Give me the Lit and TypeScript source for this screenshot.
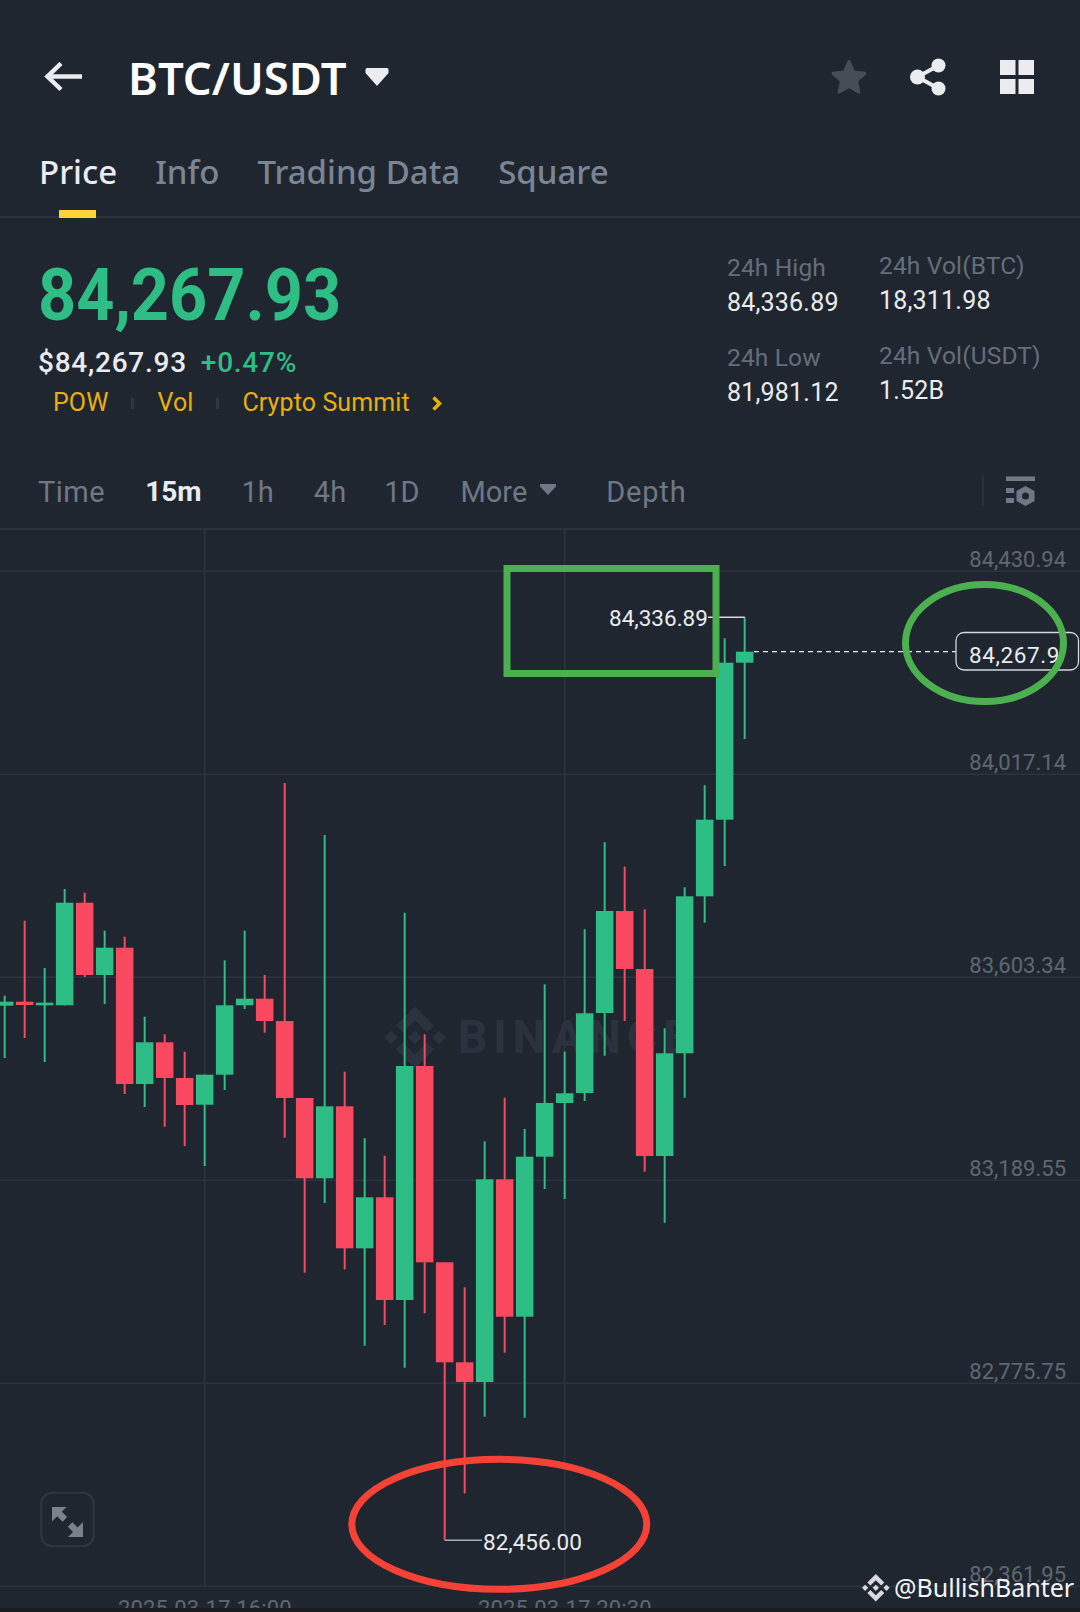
import { LitElement, html, css, svg } from 'lit';
import { customElement } from 'lit/decorators.js';

type Candle = [boolean, number, number, number, number];

// [isGreen, bodyTop, bodyBottom, wickTop, wickBottom]
const CANDLES: Candle[] = [
  [true, 1001.7, 1005.7, 995.7, 1058],
  [false, 1001.7, 1005, 920.7, 1038],
  [true, 1002.7, 1005.3, 968, 1062],
  [true, 902.7, 1005.3, 889, 1005.3],
  [false, 902.7, 975, 892.7, 977],
  [true, 947.7, 975, 930.7, 1004],
  [false, 947.7, 1084, 936.7, 1094],
  [true, 1042.3, 1084, 1016.7, 1107],
  [false, 1042.3, 1078, 1034.3, 1126.7],
  [false, 1078, 1105, 1051.7, 1146],
  [true, 1074.7, 1104.7, 1074.7, 1166],
  [true, 1005.3, 1074.7, 960.3, 1090],
  [true, 998.7, 1005.3, 930.7, 1009],
  [false, 998.7, 1021, 975, 1032.7],
  [false, 1021, 1098, 783, 1137.7],
  [false, 1098, 1178.3, 1098, 1272.7],
  [true, 1106.3, 1178.3, 835, 1203],
  [false, 1106.3, 1248.3, 1071.7, 1269.3],
  [true, 1197.3, 1248.3, 1138.3, 1345.7],
  [false, 1197.3, 1300, 1155.7, 1325],
  [true, 1066, 1300, 912.7, 1367.7],
  [false, 1066, 1262.3, 1034.3, 1313.3],
  [false, 1262.3, 1362.3, 1262.3, 1540],
  [false, 1362.3, 1382, 1287.3, 1493.3],
  [true, 1179.3, 1382, 1141.3, 1416.7],
  [false, 1179.3, 1316.7, 1097.7, 1352.7],
  [true, 1156.7, 1316.7, 1129, 1417.7],
  [true, 1103, 1156.7, 984.3, 1189],
  [true, 1093.3, 1103, 1051.7, 1199],
  [true, 1013.3, 1093, 929.3, 1101],
  [true, 911, 1013, 842.3, 1055.7],
  [false, 911, 969, 866.7, 1021],
  [false, 969, 1156, 909.3, 1171.7],
  [true, 1053.3, 1156, 1028.3, 1222.7],
  [true, 896.3, 1053.3, 887.3, 1097.7],
  [true, 819.7, 896.3, 785.3, 922.7],
  [true, 662.7, 819.7, 638.3, 866],
  [true, 651.7, 662.7, 617.3, 739],
];

const AXIS = ['84,430.94', '84,017.14', '83,603.34', '83,189.55', '82,775.75', '82,361.95'];

const BINANCE_LOGO = svg`
  <path d="M38.73 53.2l24.59-24.58 24.6 24.6 14.3-14.31L63.32 0 24.43 38.9z"/>
  <path d="M0 63.31l14.3-14.31 14.31 14.31-14.31 14.3z"/>
  <path d="M38.73 73.41L63.32 98l24.6-24.6 14.31 14.29L63.32 126.61 24.43 87.72z"/>
  <path d="M98 63.31l14.3-14.31 14.31 14.3-14.31 14.32z"/>
  <path d="M77.83 63.3L63.32 48.78 48.81 63.28l14.51 14.5z"/>
`;

@customElement('app-root')
export class AppRoot extends LitElement {
  static styles = css`
    :host {
      display: block;
      width: 1080px;
      height: 1612px;
      overflow: hidden;
      background: #1f2630;
      color: #eaecef;
      font-family: 'Noto Sans', sans-serif;
    }

    .topbar {
      height: 106px;
      padding: 24px 46px 0 44px;
      display: flex;
      align-items: center;
    }
    .back { width: 38px; height: 30px; }
    .title {
      margin-left: 46px;
      font-size: 45.4px;
      font-weight: 600;
      color: #fff;
      line-height: 50px;
    }
    .title-caret { width: 24px; height: 18px; margin-left: 19px; }
    .top-icons { margin-left: auto; display: flex; align-items: center; gap: 42px; }
    .top-icons svg { display: block; }
    .top-icons .squares { margin-left: 12px; }

    .tabs {
      height: 88px;
      box-sizing: border-box;
      padding-left: 39px;
      display: flex;
      gap: 38px;
      border-bottom: 2px solid #2b323d;
    }
    .tab {
      position: relative;
      font-size: 33px;
      font-weight: 500;
      line-height: 84px;
      color: #7a8594;
    }
    .tab.active { color: #eaecef; }
    .tab.active::after {
      content: '';
      position: absolute;
      left: 20px;
      width: 37px;
      height: 8px;
      bottom: -2px;
      background: #fcd535;
    }

    .stats {
      height: 253px;
      box-sizing: border-box;
      display: flex;
      justify-content: space-between;
      padding: 0 0 0 38px;
    }
    .left { display: flex; flex-direction: column; }
    .price {
      margin-top: 35px;
      font-family: Roboto, sans-serif;
      font-size: 72px;
      font-weight: 700;
      line-height: 86px;
      color: #2ebd85;
      transform: scaleX(0.925);
      transform-origin: left center;
    }
    .sub {
      display: flex;
      gap: 14px;
      margin-top: 7px;
      font-family: Roboto, sans-serif;
      font-size: 28px;
      font-weight: 500;
      line-height: 34px;
      letter-spacing: 0.75px;
    }
    .up { color: #2ebd85; }
    .tags {
      display: flex;
      align-items: center;
      margin: 8px 0 0 15px;
      font-family: Roboto, sans-serif;
      font-size: 25px;
      line-height: 30px;
      letter-spacing: 0.1px;
      color: #e9ae0f;
    }
    .sep { width: 3px; height: 11px; background: #2f3641; margin: 0 23px; }
    .chev { width: 10px; height: 15px; margin-left: 22px; }

    .right {
      display: grid;
      grid-template-columns: 152px 160px;
      grid-auto-rows: 90px;
      margin: 35px 41px 0 0;
      font-family: Roboto, sans-serif;
    }
    .cell { display: flex; flex-direction: column; gap: 5px; }
    .cell.high { margin-top: -2px; }
    .label { font-size: 24.5px; line-height: 30px; letter-spacing: 0.15px; color: #646e7a; white-space: nowrap; }
    .value { font-size: 25px; line-height: 30px; letter-spacing: 0.2px; color: #eaecef; }

    .times {
      height: 59px;
      box-sizing: border-box;
      padding: 0 0 16px 38px;
      display: flex;
      align-items: center;
      border-bottom: 2px solid #2b323d;
      font-family: Roboto, sans-serif;
      font-size: 29px;
      color: #6f7885;
    }
    .times span { white-space: nowrap; }
    .t-time { letter-spacing: 0.5px; }
    .t-15 { margin-left: 40px; color: #eaecef; font-weight: 700; font-size: 28px; }
    .t-1h { margin-left: 40px; }
    .t-4h { margin-left: 40px; }
    .t-1d { margin-left: 38px; }
    .t-more { margin-left: 41px; }
    .more-caret { width: 16px; height: 11px; margin: 0 0 4px 13px; }
    .t-depth { margin-left: 50px; letter-spacing: 0.8px; }
    .chart-set { margin-left: auto; display: flex; align-items: center; gap: 22px; padding-right: 45px; margin-top: -2px; }
    .divider { width: 2px; height: 30px; background: #2b323d; }

    .chart { display: block; width: 1080px; height: 1078px; }
    .grid { stroke: #2c333e; stroke-width: 1.6; }
    .axis { font: 22px Roboto, sans-serif; fill: #5f6772; text-anchor: end; }
    .date { font: 22px Roboto, sans-serif; fill: #5f6772; letter-spacing: 0.15px; }
    .mark-sm { font: 22.5px Roboto, sans-serif; fill: #eaecef; }
    .tag-price { letter-spacing: 0.6px; }
    .wm { font: 700 46px Roboto, sans-serif; fill: #2b323e; letter-spacing: 6px; }
    .tagline { font: 25px 'Noto Sans', sans-serif; fill: #f4f5f6; }

    .strip { height: 4px; background: #191b20; }
  `;

  private renderCandle(c: Candle, i: number) {
    const cx = 4.67 + 20 * i;
    const color = c[0] ? '#2ebd85' : '#f84960';
    return svg`
      <rect x=${cx - 1} y=${c[3]} width="2" height=${c[4] - c[3]} fill=${color}/>
      <rect x=${cx - 8.75} y=${c[1]} width="17.5" height=${c[2] - c[1]} fill=${color}/>
    `;
  }

  private renderChart() {
    return html`<svg class="chart" viewBox="0 530 1080 1078">
      <defs>
        <clipPath id="tag-clip"><rect x="960" y="636" width="102" height="32"/></clipPath>
      </defs>
      ${[571.3, 774.3, 977.3, 1180.3, 1383.3, 1586.3].map(
        (y) => svg`<line class="grid" x1="0" x2="1080" y1=${y} y2=${y}/>`
      )}
      <line class="grid" x1="204.7" x2="204.7" y1="530" y2="1586"/>
      <line class="grid" x1="564.7" x2="564.7" y1="530" y2="1586"/>

      <g transform="translate(384 1006.5) scale(0.49)" fill="#2b323e">${BINANCE_LOGO}</g>
      <text class="wm" x="458" y="1053">BINANCE</text>

      ${AXIS.map((t, i) => svg`<text class="axis" x="1066" y=${567 + 203 * i}>${t}</text>`)}
      <text class="date" x="118" y="1616">2025-03-17 16:00</text>
      <text class="date" x="478" y="1616">2025-03-17 20:30</text>

      ${CANDLES.map((c, i) => this.renderCandle(c, i))}

      <path d="M708 617.3H744.8" stroke="#d5d8dc" stroke-width="1.5" fill="none"/>
      <text class="mark-sm" x="609" y="625.5">84,336.89</text>
      <line x1="754" x2="956" y1="651.7" y2="651.7" stroke="#e6e8ea" stroke-width="1.3" stroke-dasharray="5 4"/>
      <rect x="956" y="632.5" width="122.5" height="37.5" rx="8" fill="#1f2630" stroke="#d5d8dc" stroke-width="1.3"/>
      <text class="mark-sm tag-price" x="969" y="663" clip-path="url(#tag-clip)">84,267.93</text>

      <path d="M444.7 1540.3H482" stroke="#a9adb3" stroke-width="1.5" fill="none"/>
      <text class="mark-sm" x="483" y="1550">82,456.00</text>

      <rect x="507" y="568.5" width="209" height="105" fill="none" stroke="#4caf50" stroke-width="7"/>
      <ellipse cx="984.5" cy="643" rx="79" ry="58.5" fill="none" stroke="#4caf50" stroke-width="7"/>
      <ellipse cx="499.3" cy="1524.3" rx="147.5" ry="65" fill="none" stroke="#f44336" stroke-width="7"/>

      <rect x="41.3" y="1492.7" width="52.4" height="53.6" rx="11" fill="none" stroke="#2e3641" stroke-width="2"/>
      <path fill="#7a818c" d="M52 1507h14.5l-4.7 4.7 5.4 5.4-4.6 4.6-5.4-5.4-5.2 5.2zM83 1537h-15l5-5-5.2-5.2 4.6-4.6 5.2 5.2 5.4-5.4z"/>

      <g transform="translate(862 1574) scale(0.218)" fill="#d8dadd">${BINANCE_LOGO}</g>
      <text class="tagline" x="894" y="1597">@BullishBanter</text>
    </svg>`;
  }

  render() {
    return html`
      <div class="topbar">
        <svg class="back" viewBox="0 0 38 30" fill="none" stroke="#eaecef" stroke-width="4.5">
          <path d="M38 14.5H4"/><path d="M17 1.5L3.5 14.5 17 27.5"/>
        </svg>
        <span class="title">BTC/USDT</span>
        <svg class="title-caret" viewBox="0 0 24 18"><path fill="#eaecef" d="M2 0h20a1.500 1.500 0 0 1 1.500 1.500v3.500L12 18 .5 5V1.500A1.500 1.500 0 0 1 2 0z"/></svg>
        <div class="top-icons">
          <svg width="38" height="38" viewBox="0 0 38 38">
            <path fill="#474d57" stroke="#474d57" stroke-width="3" stroke-linejoin="round" d="M19 3.500l4.800 10.500 11.200 1.300-8.500 7.700 2.400 11.300L19 28.500 9.100 34.300 11.500 23 3 15.300 14.200 14z"/>
          </svg>
          <svg width="36" height="38" viewBox="0 0 36 38" fill="#eaecef" stroke="#eaecef">
            <circle cx="28.500" cy="7.500" r="7" stroke="none"/><circle cx="28.500" cy="30.500" r="7" stroke="none"/><circle cx="7.500" cy="19" r="7.500" stroke="none"/>
            <path d="M28.500 7.500L7.500 19l21 11.500" fill="none" stroke-width="4"/>
          </svg>
          <svg class="squares" width="34" height="34" viewBox="0 0 34 34" fill="#eaecef">
            <rect width="15.500" height="15"/><rect x="18.500" width="15.500" height="15"/>
            <rect y="19" width="15.500" height="15"/><rect x="18.500" y="19" width="15.500" height="15"/>
          </svg>
        </div>
      </div>

      <div class="tabs">
        <span class="tab active">Price</span>
        <span class="tab">Info</span>
        <span class="tab">Trading Data</span>
        <span class="tab">Square</span>
      </div>

      <div class="stats">
        <div class="left">
          <div class="price">84,267.93</div>
          <div class="sub"><span>$84,267.93</span><span class="up">+0.47%</span></div>
          <div class="tags">
            <span>POW</span><i class="sep"></i><span>Vol</span><i class="sep"></i><span>Crypto Summit</span>
            <svg class="chev" viewBox="0 0 10 15" fill="none" stroke="#e9ae0f" stroke-width="3.500"><path d="M1.500 1.500L7.500 7.500 1.500 13.500"/></svg>
          </div>
        </div>
        <div class="right">
          <div class="cell"><span class="label">24h High</span><span class="value">84,336.89</span></div>
          <div class="cell high"><span class="label">24h Vol(BTC)</span><span class="value">18,311.98</span></div>
          <div class="cell"><span class="label">24h Low</span><span class="value">81,981.12</span></div>
          <div class="cell high"><span class="label">24h Vol(USDT)</span><span class="value">1.52B</span></div>
        </div>
      </div>

      <div class="times">
        <span class="t-time">Time</span>
        <span class="t-15">15m</span>
        <span class="t-1h">1h</span>
        <span class="t-4h">4h</span>
        <span class="t-1d">1D</span>
        <span class="t-more">More</span>
        <svg class="more-caret" viewBox="0 0 16 11"><path fill="#6f7885" d="M0 0h16v2.500L8 11 0 2.500z"/></svg>
        <span class="t-depth">Depth</span>
        <div class="chart-set">
          <i class="divider"></i>
          <svg width="29" height="30" viewBox="0 0 29 30" fill="#6f7885">
            <rect y="0.500" width="29" height="4.500"/>
            <rect y="12" width="8" height="5"/><rect y="22" width="8" height="5"/>
            <path fill-rule="evenodd" d="M19.500 10l9 5v10l-9 5-9-5V15zM19.500 16.500a3.500 3.500 0 1 0 0 7 3.500 3.500 0 0 0 0-7z"/>
          </svg>
        </div>
      </div>

      ${this.renderChart()}
      <div class="strip"></div>
    `;
  }
}
